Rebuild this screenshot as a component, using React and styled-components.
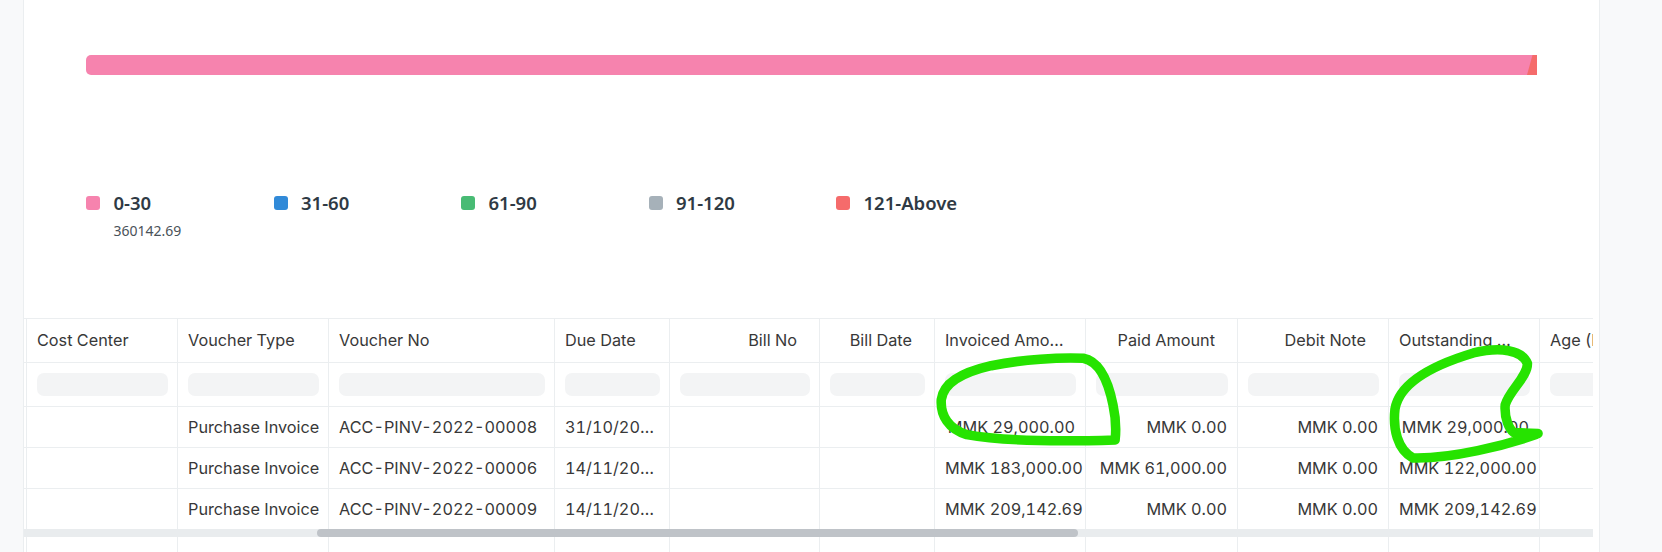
import React from 'react';
import styled, { createGlobalStyle } from 'styled-components';

const GlobalStyle = createGlobalStyle`
  html, body {
    margin: 0;
    padding: 0;
    background: #f8f9fa;
  }
  * {
    box-sizing: border-box;
  }
`;

const Page = styled.div`
  position: relative;
  display: flex;
  height: 552px;
  overflow: hidden;
  background: #f8f9fa;
`;

const Gutter = styled.div`
  flex: 0 0 ${(p) => p.$width}px;
  background: #f8f9fa;
`;

const Card = styled.div`
  flex: 0 0 1577px;
  background: #fff;
  border-left: 1px solid #ebeef0;
  border-right: 1px solid #ebeef0;
  display: flex;
  flex-direction: column;
`;

const ChartSection = styled.div`
  flex: 0 0 318px;
  padding: 55px 0 0 62px;
`;

const Bar = styled.div`
  display: flex;
  width: 1451px;
  height: 20px;
`;

const BarSegment = styled.div`
  background: ${(p) => p.$color};
  flex: ${(p) => (p.$grow ? '1 1 auto' : `0 0 ${p.$width}px`)};
  border-radius: ${(p) => (p.$first ? '5px 0 0 5px' : '0')};
  ${(p) => p.$slant && 'clip-path: polygon(55% 0, 100% 0, 100% 100%, 0 100%);'}
`;

const BarTail = styled.div`
  flex: 0 0 10px;
  background: #f683ae;
  display: flex;
  & > div {
    flex: 1;
  }
`;

const Legend = styled.div`
  display: flex;
  align-items: flex-start;
  margin-top: 121px;
`;

const LegendItem = styled.div`
  width: 187.5px;
  display: grid;
  grid-template-columns: 14px auto;
  column-gap: 13.5px;
  align-items: center;
  align-content: start;
`;

const Swatch = styled.span`
  width: 14px;
  height: 14px;
  border-radius: 3px;
  background: ${(p) => p.$color};
`;

const LegendLabel = styled.span`
  font-family: 'Noto Sans', 'Open Sans', sans-serif;
  font-weight: 600;
  font-size: 18.5px;
  line-height: 14px;
  color: #2f3a44;
`;

const LegendValue = styled.span`
  grid-column: 2;
  margin-top: 13px;
  font-family: 'Noto Sans', 'Open Sans', sans-serif;
  font-size: 14px;
  line-height: 16px;
  color: #4a5259;
`;

const TableWrap = styled.div`
  position: relative;
  width: 1569px;
  flex: 1;
  overflow: hidden;
  border-top: 1px solid #ebeef0;
  font-family: Inter, 'Noto Sans', sans-serif;
  font-size: 16.25px;
  font-variant-numeric: tabular-nums;
  color: #383838;
`;

const Row = styled.div`
  display: flex;
  height: ${(p) => p.$height}px;
  line-height: ${(p) => p.$height - 1}px;
  border-bottom: ${(p) => (p.$last ? 'none' : '1px solid #ebeef0')};
`;

const Cell = styled.div`
  flex: 0 0 ${(p) => p.$width}px;
  padding: 0 ${(p) => p.$padRight ?? 10}px 0 ${(p) => p.$padLeft ?? 10}px;
  text-align: ${(p) => p.$align || 'left'};
  border-right: 1px solid #ebeef0;
  overflow: hidden;
  white-space: nowrap;
`;

const CellText = styled.span`
  display: block;
  overflow: ${(p) => (p.$truncate ? 'hidden' : 'visible')};
  text-overflow: ellipsis;
  white-space: nowrap;
`;

const FilterCell = styled.div`
  flex: 0 0 ${(p) => p.$width}px;
  padding: 10px 9px 0 10px;
  border-right: 1px solid #ebeef0;
`;

const FilterInput = styled.div`
  height: 23px;
  border-radius: 7px;
  background: #f3f4f5;
`;

const ScrollTrack = styled.div`
  position: absolute;
  left: 0;
  right: 0;
  top: 210px;
  height: 8px;
  background: #e9ecee;
`;

const ScrollThumb = styled.div`
  position: absolute;
  top: 0;
  left: ${(p) => p.$left}px;
  width: ${(p) => p.$width}px;
  height: 8px;
  border-radius: 4px;
  background: #bfc3c8;
`;

const Annotation = styled.svg`
  position: absolute;
  left: 0;
  top: 0;
  pointer-events: none;
`;

const legend = [
  { label: '0-30', color: '#f683ae', value: '360142.69' },
  { label: '31-60', color: '#318ad8' },
  { label: '61-90', color: '#48bb74' },
  { label: '91-120', color: '#a6b1b9' },
  { label: '121-Above', color: '#f56b6b' },
];

// first column is scrolled almost out of view
const columns = [
  { label: '', width: 3, pad: 0 },
  { label: 'Cost Center', width: 151 },
  { label: 'Voucher Type', width: 151 },
  { label: 'Voucher No', width: 226 },
  { label: 'Due Date', width: 115, bodyPadRight: 15, truncate: true },
  { label: 'Bill No', width: 150, align: 'right' },
  { label: 'Bill Date', width: 115, align: 'right' },
  { label: 'Invoiced Amount', width: 151, align: 'right', headPadRight: 13 },
  { label: 'Paid Amount', width: 152, align: 'right' },
  { label: 'Debit Note', width: 151, align: 'right' },
  { label: 'Outstanding Amount', width: 151, align: 'right' },
  { label: 'Age (Days)', width: 151, headAlign: 'left' },
];

const rows = [
  ['', '', 'Purchase Invoice', 'ACC-PINV-2022-00008', '31/10/2022', '', '', 'MMK 29,000.00', 'MMK 0.00', 'MMK 0.00', 'MMK 29,000.00', ''],
  ['', '', 'Purchase Invoice', 'ACC-PINV-2022-00006', '14/11/2022', '', '', 'MMK 183,000.00', 'MMK 61,000.00', 'MMK 0.00', 'MMK 122,000.00', ''],
  ['', '', 'Purchase Invoice', 'ACC-PINV-2022-00009', '14/11/2022', '', '', 'MMK 209,142.69', 'MMK 0.00', 'MMK 0.00', 'MMK 209,142.69', ''],
];

const headPad = (col) => {
  if (col.pad === 0) return 0;
  if (col.headPadRight) return col.headPadRight;
  return col.align === 'right' ? 22 : 10;
};

export default function App() {
  return (
    <>
      <GlobalStyle />
      <Page>
        <Gutter $width={23} />
        <Card>
          <ChartSection>
            <Bar>
              <BarSegment $color="#f683ae" $grow $first />
              <BarTail>
                <BarSegment $color="#f56b6b" $slant />
              </BarTail>
            </Bar>
            <Legend>
              {legend.map((item) => (
                <LegendItem key={item.label}>
                  <Swatch $color={item.color} />
                  <LegendLabel>{item.label}</LegendLabel>
                  {item.value && <LegendValue>{item.value}</LegendValue>}
                </LegendItem>
              ))}
            </Legend>
          </ChartSection>

          <TableWrap>
            <Row $height={44}>
              {columns.map((col, i) => (
                <Cell
                  key={i}
                  $width={col.width}
                  $align={col.headAlign || col.align}
                  $padLeft={col.pad}
                  $padRight={headPad(col)}
                >
                  <CellText $truncate>{col.label}</CellText>
                </Cell>
              ))}
            </Row>
            <Row $height={44}>
              {columns.map((col, i) =>
                i === 0 ? (
                  <Cell key={i} $width={col.width} $padLeft={0} $padRight={0} />
                ) : (
                  <FilterCell key={i} $width={col.width}>
                    <FilterInput />
                  </FilterCell>
                )
              )}
            </Row>
            {rows.map((r, ri) => (
              <Row key={ri} $height={41}>
                {columns.map((col, i) => (
                  <Cell
                    key={i}
                    $width={col.width}
                    $align={col.align}
                    $padLeft={col.pad}
                    $padRight={col.pad ?? col.bodyPadRight}
                  >
                    {i === 0 ? null : <CellText $truncate={col.truncate}>{r[i]}</CellText>}
                  </Cell>
                ))}
              </Row>
            ))}
            <Row $height={41} $last>
              {columns.map((col, i) => (
                <Cell key={i} $width={col.width} $padLeft={col.pad} $padRight={col.pad} />
              ))}
            </Row>
            <ScrollTrack>
              <ScrollThumb $left={293} $width={761} />
            </ScrollTrack>
          </TableWrap>
        </Card>
        <Gutter $width={62} />

        <Annotation width="1662" height="552" viewBox="0 0 1662 552">
          <g
            transform="scale(1.06)"
            fill="none"
            stroke="#26e300"
            strokeWidth="9"
            strokeLinecap="round"
            strokeLinejoin="round"
          >
            <path d="M1052 415 C1020 416 950 417 912 410 C895 405 887 392 888 377 C890 362 905 352 935 345 C965 339 1000 337 1022 338 C1038 341 1046 362 1050 382 C1053 396 1053 406 1052 415" />
            <path d="M1449 410 C1420 420 1370 433 1333 432 C1318 424 1314 404 1316 386 C1320 362 1350 345 1390 333 C1415 327 1436 330 1441 343 C1441 356 1424 368 1420 382 C1419 395 1424 405 1428 408 L1451 409" />
          </g>
        </Annotation>
      </Page>
    </>
  );
}
